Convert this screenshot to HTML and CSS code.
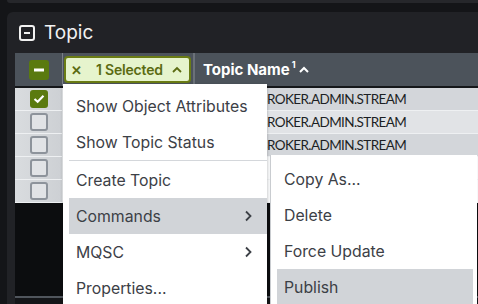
FILE: index.html
```html
<!DOCTYPE html>
<html lang="en">
<head>
  <meta charset="UTF-8">
  <title>Topic</title>
  <link rel="stylesheet" href="styles.css">
</head>
<body>
  <div class="topbar"></div>
  <div class="panel">
    <div class="title">
      <svg class="collapse" width="16" height="16" viewBox="0 0 16 16">
        <rect x="1" y="1" width="14" height="14" rx="2" fill="none" stroke="#f2f2f2" stroke-width="2"/>
        <line x1="5" y1="8" x2="11" y2="8" stroke="#f2f2f2" stroke-width="2"/>
      </svg>
      <span>Topic</span>
    </div>

    <div class="table">
      <div class="thead">
        <div class="checkcol">
          <span class="box on">
            <svg width="20" height="20" viewBox="0 0 20 20"><line x1="5" y1="10" x2="15" y2="10" stroke="#fff" stroke-width="3"/></svg>
          </span>
        </div>
        <div class="selected">
          <span class="x">&#x2715;</span>
          <span class="count">1 Selected</span>
          <svg width="12" height="8" viewBox="0 0 12 8"><polyline points="2,6 6,2 10,6" fill="none" stroke="#5b6b12" stroke-width="1.8"/></svg>
        </div>
        <div class="colname">Topic Name <sup>1</sup>
          <svg width="12" height="8" viewBox="0 0 12 8"><polyline points="2,6 6,2 10,6" fill="none" stroke="#fff" stroke-width="2"/></svg>
        </div>
      </div>

      <div class="row odd">
        <div class="checkcol"><span class="box on">
          <svg width="20" height="20" viewBox="0 0 20 20"><polyline points="5,10 8.5,13 15,6.5" fill="none" stroke="#fff" stroke-width="2.4"/></svg>
        </span></div>
        <div class="cell spacer"></div>
        <div class="cell">SYSTEM.BROKER.ADMIN.STREAM</div>
      </div>
      <div class="row even">
        <div class="checkcol"><span class="box"></span></div>
        <div class="cell spacer"></div>
        <div class="cell">SYSTEM.BROKER.ADMIN.STREAM</div>
      </div>
      <div class="row odd">
        <div class="checkcol"><span class="box"></span></div>
        <div class="cell spacer"></div>
        <div class="cell">SYSTEM.BROKER.ADMIN.STREAM</div>
      </div>
      <div class="row blank">
        <div class="checkcol"><span class="box"></span></div>
        <div class="cell spacer"></div>
        <div class="cell"></div>
      </div>
      <div class="row blank">
        <div class="checkcol"><span class="box"></span></div>
        <div class="cell spacer"></div>
        <div class="cell"></div>
      </div>
      <div class="empty"></div>
      <div class="footer"></div>

      <div class="menu">
        <div class="item">Show Object Attributes</div>
        <div class="item">Show Topic Status</div>
        <div class="sep"></div>
        <div class="item">Create Topic</div>
        <div class="item hover">Commands
          <svg width="8" height="12" viewBox="0 0 8 12"><polyline points="2,1.5 6.5,6 2,10.5" fill="none" stroke="#3c4046" stroke-width="1.8"/></svg>
        </div>
        <div class="item">MQSC
          <svg width="8" height="12" viewBox="0 0 8 12"><polyline points="2,1.5 6.5,6 2,10.5" fill="none" stroke="#3c4046" stroke-width="1.8"/></svg>
        </div>
        <div class="item">Properties...</div>
      </div>

      <div class="menu submenu">
        <div class="item">Copy As...</div>
        <div class="item">Delete</div>
        <div class="item">Force Update</div>
        <div class="item hover">Publish</div>
      </div>
    </div>
  </div>
</body>
</html>
```

FILE: styles.css
```css
body {
  margin: 0;
  background: #141518;
  font-family: Inter, "Noto Sans", sans-serif;
  overflow: hidden;
  height: 304px;
}
.topbar {
  height: 3px;
  margin-left: 7px;
  background: #26272b;
  border-bottom-left-radius: 5px;
}
.panel {
  margin: 9px 0 0 7px;
  height: 292px;
  background: #212226;
  border-top-left-radius: 6px;
  padding-left: 8px;
}
.title {
  height: 41px;
  display: flex;
  align-items: center;
  padding-left: 4px;
  gap: 9px;
  color: #f2f2f2;
  font-size: 19px;
}
.table {
  position: relative;
  height: 251px;
  background: #0c0d0f;
  display: flex;
  flex-direction: column;
}
.thead {
  height: 33px;
  background: #4c535b;
  border-bottom: 2px solid #15171a;
  display: flex;
  align-items: center;
  flex-shrink: 0;
}
.checkcol {
  width: 47px;
  height: 100%;
  display: flex;
  align-items: center;
  justify-content: center;
  border-right: 1px solid #7a8088;
  flex-shrink: 0;
}
.box {
  width: 16px;
  height: 16px;
  border: 2px solid #8d939b;
  border-radius: 3px;
  background: #e1e3e6;
  display: block;
}
.box.on {
  background: #5a7a0f;
  border-color: #5a7a0f;
}
.box svg {
  display: block;
  margin: -2px;
}
.selected {
  margin-left: 1px;
  width: 112px;
  height: 23px;
  border: 2px solid #6a7c14;
  border-radius: 4px;
  background: #e6f4cd;
  display: flex;
  align-items: center;
  padding: 0 6px 0 5px;
  color: #5b6b12;
  font-size: 14px;
  font-weight: 600;
  flex-shrink: 0;
}
.selected .x {
  font-size: 13px;
  width: 25px;
}
.selected .count {
  flex: 1;
  letter-spacing: -0.2px;
}
.colname {
  margin-left: 2px;
  height: 100%;
  border-left: 2px solid #6b7178;
  padding-left: 8px;
  display: flex;
  align-items: center;
  color: #fff;
  font-weight: 700;
  font-size: 15px;
  gap: 2px;
}
.colname sup {
  font-size: 9px;
  align-self: flex-start;
  margin-top: 6px;
}
.row {
  height: 22px;
  border-bottom: 1px solid #eef0f2;
  display: flex;
  flex-shrink: 0;
}
.row .checkcol {
  background: linear-gradient(to right, #d9dcdf, #cdd0d4);
  border-right: 1px solid #eef0f2;
}
.row .box {
  width: 14px;
  height: 14px;
}
.row .box.on svg {
  width: 18px;
  height: 18px;
}
.cell {
  flex: 1;
  padding-left: 16px;
  display: flex;
  align-items: center;
  font-family: Lato, sans-serif;
  font-size: 13.5px;
  letter-spacing: -0.6px;
  color: #1c1f24;
  white-space: nowrap;
  overflow: hidden;
}
.cell.spacer {
  flex: 0 0 130px;
  padding: 0;
}
.odd .cell { background: #d3d6da; }
.even .cell { background: #e1e3e6; }
.blank .cell { background: #f7f8f9; }
.empty {
  flex: 1;
}
.footer {
  height: 6px;
  border-top: 2px solid #50555c;
  background: #141518;
}
.menu {
  position: absolute;
  left: 48px;
  top: 31px;
  width: 198px;
  height: 230px;
  background: #fff;
  padding: 4px 0 0 6px;
  box-shadow: 0 1px 3px rgba(0,0,0,0.25);
}
.item {
  height: 36px;
  display: flex;
  align-items: center;
  justify-content: space-between;
  padding: 0 15px 0 7px;
  font-size: 15.8px;
  color: #3c4046;
}
.item.hover {
  background: #d1d4d8;
}
.sep {
  height: 1px;
  background: #d4d7db;
  margin: 0 0 1px;
}
.submenu {
  left: 255px;
  top: 102px;
  width: 196px;
  height: 149px;
  padding: 6px 4px 0 6px;
  border-left: 1px solid #c9ccd0;
  box-shadow: none;
}
```
